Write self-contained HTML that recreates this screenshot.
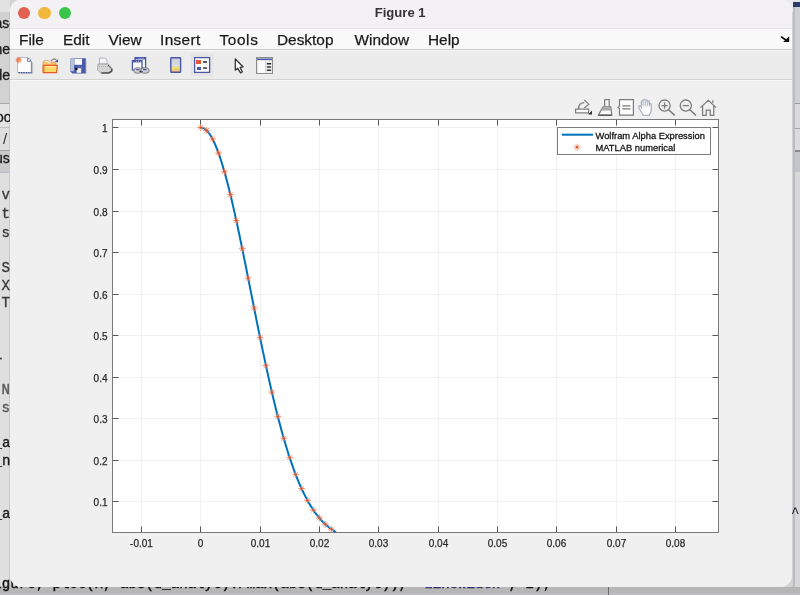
<!DOCTYPE html>
<html><head><meta charset="utf-8">
<style>
*{margin:0;padding:0;box-sizing:border-box}
html,body{width:800px;height:595px;overflow:hidden;background:#d2d2d2;font-family:"Liberation Sans",sans-serif}
.abs{position:absolute}
.mono{font-family:"Liberation Mono",monospace;font-size:14.08px;line-height:16px}
.sans{font-family:"Liberation Sans",sans-serif}
#win,svg,#desk{will-change:transform}
#win{position:absolute;left:10.3px;top:0;width:782.3px;height:587px;border-radius:10px 10px 12px 12px;overflow:hidden;background:#f0f0f0}
#title{position:absolute;left:0;top:0;width:100%;height:28px;background:#f3f1f3}
#title .t{position:absolute;left:-1px;width:100%;top:5px;text-align:center;font-weight:bold;font-size:13.1px;color:#333;}
.light{position:absolute;top:7.15px;width:12.2px;height:12.2px;border-radius:50%}
#menu{position:absolute;left:0;top:28px;width:100%;height:22px;background:#f9f9f9;border-top:1px solid #e6e4e6;border-bottom:1px solid #c8c8c8}
#menu span{position:absolute;top:2px;font-size:15.4px;color:#1a1a1a;-webkit-text-stroke:0.25px #1a1a1a}
#tool{position:absolute;left:0;top:50px;width:100%;height:30px;background:#ececec;border-top:1px solid #fafafa;border-bottom:1px solid #d2d2d2}
#fig{position:absolute;left:0;top:80px;width:100%;height:507px;background:#f0f0f0;border-top:1px solid #f8f8f8}
svg text{font-family:"Liberation Sans",sans-serif}
</style></head><body>
<div id="desk">
 <div class="abs" style="left:775px;top:0;width:25px;height:2px;background:#ececec"></div>
 <div class="abs" style="left:775px;top:0;width:18px;height:12px;background:#ececec"></div>
 <div class="abs" style="left:0;top:0;width:10px;height:12px;background:#e2e2e2"></div>
 <div class="abs" style="left:0;top:12px;width:10px;height:91px;background:#d2d2d2"></div>
 <div class="abs" style="left:0;top:103px;width:10px;height:1px;background:#a8a8a8"></div>
 <div class="abs" style="left:0;top:104px;width:10px;height:23px;background:#e4e4e4"></div>
 <div class="abs" style="left:0;top:127px;width:10px;height:1px;background:#c4c4c4"></div>
 <div class="abs" style="left:0;top:128px;width:10px;height:22px;background:#dedede"></div>
 <div class="abs" style="left:0;top:150px;width:10px;height:1px;background:#a4a4a4"></div>
 <div class="abs" style="left:0;top:151px;width:10px;height:21px;background:#cacaca"></div>
 <div class="abs" style="left:0;top:172px;width:10px;height:1px;background:#b4bcc8"></div>
 <div class="abs" style="left:0;top:173px;width:10px;height:415px;background:#dfdfdf"></div>
 <div class="abs" style="left:8.5px;top:12px;width:1.5px;height:576px;background:#bcc4d0;opacity:.8"></div>
 <div class="abs sans" style="left:-5.5px;top:11px;font-size:14px;color:#1a1a1a;line-height:25.8px;-webkit-text-stroke:0.3px #1a1a1a">asc<br>nel<br>de</div>
 <div class="abs sans" style="left:-4px;top:109px;font-size:14px;color:#1a1a1a;-webkit-text-stroke:0.3px #1a1a1a">oo</div>
 <div class="abs sans" style="left:3px;top:130px;font-size:15px;color:#303030">/</div>
 <div class="abs sans" style="left:-5px;top:150px;font-size:14px;color:#1a1a1a;-webkit-text-stroke:0.3px #1a1a1a">us</div>
 <div class="abs mono" style="left:1.5px;top:187px;color:#3a3a3a;-webkit-text-stroke:0.35px #3a3a3a">v</div>
 <div class="abs mono" style="left:1.5px;top:206px;color:#3a3a3a;-webkit-text-stroke:0.35px #3a3a3a">t</div>
 <div class="abs mono" style="left:1.5px;top:224.5px;color:#3a3a3a;-webkit-text-stroke:0.35px #3a3a3a">s</div>
 <div class="abs mono" style="left:1.5px;top:260px;color:#3a3a3a;-webkit-text-stroke:0.35px #3a3a3a">S</div>
 <div class="abs mono" style="left:1.5px;top:278px;color:#3a3a3a;-webkit-text-stroke:0.35px #3a3a3a">X</div>
 <div class="abs mono" style="left:1.5px;top:294.5px;color:#3a3a3a;-webkit-text-stroke:0.35px #3a3a3a">T</div>
 <div class="abs mono" style="left:-4.5px;top:351px;color:#3a3a3a;-webkit-text-stroke:0.35px #3a3a3a">-</div>
 <div class="abs mono" style="left:1.5px;top:382px;color:#555;-webkit-text-stroke:0.35px #555">N</div>
 <div class="abs mono" style="left:1.5px;top:399.5px;color:#555;-webkit-text-stroke:0.35px #555">s</div>
 <div class="abs mono" style="left:-6.5px;top:435px;color:#1a1a1a;-webkit-text-stroke:0.35px #1a1a1a">_a</div>
 <div class="abs mono" style="left:-6.5px;top:452.5px;color:#1a1a1a;-webkit-text-stroke:0.35px #1a1a1a">_n</div>
 <div class="abs mono" style="left:-6.5px;top:506px;color:#1a1a1a;-webkit-text-stroke:0.35px #1a1a1a">_a</div>
 <div class="abs" style="left:0;top:587px;width:800px;height:8px;background:#b6b6b6"></div>
 <div class="abs" style="left:0;top:593px;width:800px;height:1px;background:#c4c8d4;opacity:.6"></div>
 <div class="abs" style="left:608px;top:587px;width:1.2px;height:8px;background:#6a6a6a"></div>
 <div class="abs mono" style="left:-15.1px;top:576px;color:#111;white-space:pre;-webkit-text-stroke:0.4px #111">figure; plot(x, abs(u_analyt)./max(abs(u_analyt)), <span style="color:#4a50c8">'LineWidth'</span>, 2);</div>
 <div class="abs" style="left:793px;top:0;width:7px;height:2px;background:#e4e4e4"></div>
 <div class="abs" style="left:793px;top:2px;width:7px;height:4.5px;background:#2c3a6c"></div>
 <div class="abs" style="left:793px;top:7px;width:7px;height:96px;background:#cdd0d4"></div>
 <div class="abs" style="left:793px;top:103px;width:7px;height:1px;background:#9a9a9a"></div>
 <div class="abs" style="left:793px;top:104px;width:7px;height:24px;background:#dadada"></div>
 <div class="abs" style="left:793px;top:128px;width:7px;height:1px;background:#a8a8a8"></div>
 <div class="abs" style="left:793px;top:129px;width:7px;height:21px;background:#dcdcdc"></div>
 <div class="abs" style="left:793px;top:150px;width:7px;height:2px;background:#8a8a8a"></div>
 <div class="abs" style="left:793px;top:152px;width:7px;height:20px;background:#c2c6cc"></div>
 <div class="abs" style="left:793px;top:172px;width:7px;height:415px;background:#d8d8d8"></div>
 <div class="abs" style="left:793px;top:7px;width:1.5px;height:580px;background:#b8bcc4"></div>
 <div class="abs mono" style="left:791px;top:505px;color:#111">^</div>
</div>
<div id="win">
 <div id="title">
  <div class="light" style="left:7.55px;background:#e0614f"></div>
  <div class="light" style="left:28.35px;background:#f0b73a"></div>
  <div class="light" style="left:49.15px;background:#3ac449"></div>
  <div class="t">Figure 1</div>
 </div>
 <div id="menu">
  <span style="left:9.0px">File</span>
  <span style="left:53.0px">Edit</span>
  <span style="left:98.5px">View</span>
  <span style="left:150.0px;letter-spacing:0.35px">Insert</span>
  <span style="left:209.5px;letter-spacing:0.6px">Tools</span>
  <span style="left:267.0px">Desktop</span>
  <span style="left:344.5px">Window</span>
  <span style="left:418px">Help</span>
 </div>
 <div id="tool"></div>
 <div id="fig"></div>
</div>
<!--PLOT--><svg class="abs" style="left:0;top:0" width="800" height="595" viewBox="0 0 800 595">
 <rect x="112.5" y="119.5" width="606.0" height="413.0" fill="#fff"/>
 <path d="M141.50,119.5V532.5M200.50,119.5V532.5M260.50,119.5V532.5M319.50,119.5V532.5M378.50,119.5V532.5M438.50,119.5V532.5M497.50,119.5V532.5M556.50,119.5V532.5M616.50,119.5V532.5M675.50,119.5V532.5M112.5,501.50H718.5M112.5,460.50H718.5M112.5,418.50H718.5M112.5,377.50H718.5M112.5,335.50H718.5M112.5,294.50H718.5M112.5,252.50H718.5M112.5,211.50H718.5M112.5,169.50H718.5M112.5,127.50H718.5" stroke="#f1f1f1" stroke-width="1" fill="none"/>
 <path d="M141.50,532.5v-6M141.50,119.5v6M200.50,532.5v-6M200.50,119.5v6M260.50,532.5v-6M260.50,119.5v6M319.50,532.5v-6M319.50,119.5v6M378.50,532.5v-6M378.50,119.5v6M438.50,532.5v-6M438.50,119.5v6M497.50,532.5v-6M497.50,119.5v6M556.50,532.5v-6M556.50,119.5v6M616.50,532.5v-6M616.50,119.5v6M675.50,532.5v-6M675.50,119.5v6M112.5,501.50h6M718.5,501.50h-6M112.5,460.50h6M718.5,460.50h-6M112.5,418.50h6M718.5,418.50h-6M112.5,377.50h6M718.5,377.50h-6M112.5,335.50h6M718.5,335.50h-6M112.5,294.50h6M718.5,294.50h-6M112.5,252.50h6M718.5,252.50h-6M112.5,211.50h6M718.5,211.50h-6M112.5,169.50h6M718.5,169.50h-6M112.5,127.50h6M718.5,127.50h-6" stroke="#555555" stroke-width="1" fill="none"/>
 <rect x="112.5" y="119.5" width="606.0" height="413.0" fill="none" stroke="#7a7a7a" stroke-width="1"/>
 <g font-size="10" fill="#2a2a2a" stroke="#2a2a2a" stroke-width="0.25"><text x="141.50" y="546.5" text-anchor="middle">-0.01</text><text x="200.50" y="546.5" text-anchor="middle">0</text><text x="260.50" y="546.5" text-anchor="middle">0.01</text><text x="319.50" y="546.5" text-anchor="middle">0.02</text><text x="378.50" y="546.5" text-anchor="middle">0.03</text><text x="438.50" y="546.5" text-anchor="middle">0.04</text><text x="497.50" y="546.5" text-anchor="middle">0.05</text><text x="556.50" y="546.5" text-anchor="middle">0.06</text><text x="616.50" y="546.5" text-anchor="middle">0.07</text><text x="675.50" y="546.5" text-anchor="middle">0.08</text><text x="107.5" y="505.80" text-anchor="end">0.1</text><text x="107.5" y="464.80" text-anchor="end">0.2</text><text x="107.5" y="422.80" text-anchor="end">0.3</text><text x="107.5" y="381.80" text-anchor="end">0.4</text><text x="107.5" y="339.80" text-anchor="end">0.5</text><text x="107.5" y="298.80" text-anchor="end">0.6</text><text x="107.5" y="256.80" text-anchor="end">0.7</text><text x="107.5" y="215.80" text-anchor="end">0.8</text><text x="107.5" y="173.80" text-anchor="end">0.9</text><text x="107.5" y="131.80" text-anchor="end">1</text></g>
 <defs><clipPath id="ax"><rect x="112.5" y="115.5" width="606.0" height="417.0"/></clipPath></defs>
 <g clip-path="url(#ax)"><polyline points="200.70,127.50 201.55,127.56 202.40,127.74 203.25,128.04 204.10,128.46 204.95,129.00 205.80,129.66 206.66,130.44 207.51,131.33 208.36,132.34 209.21,133.47 210.06,134.71 210.91,136.07 211.76,137.54 212.61,139.12 213.46,140.81 214.31,142.61 215.16,144.52 216.01,146.53 216.86,148.65 217.72,150.87 218.57,153.19 219.42,155.61 220.27,158.13 221.12,160.73 221.97,163.44 222.82,166.23 223.67,169.11 224.52,172.07 225.37,175.12 226.22,178.25 227.07,181.45 227.92,184.73 228.78,188.09 229.63,191.51 230.48,195.00 231.33,198.56 232.18,202.18 233.03,205.86 233.88,209.60 234.73,213.39 235.58,217.23 236.43,221.12 237.28,225.05 238.13,229.03 238.98,233.05 239.84,237.10 240.69,241.19 241.54,245.31 242.39,249.46 243.24,253.64 244.09,257.84 244.94,262.06 245.79,266.29 246.64,270.54 247.49,274.81 248.34,279.08 249.19,283.36 250.04,287.64 250.90,291.93 251.75,296.22 252.60,300.50 253.45,304.78 254.30,309.05 255.15,313.31 256.00,317.55 256.85,321.79 257.70,326.00 258.55,330.20 259.40,334.38 260.25,338.53 261.10,342.66 261.96,346.76 262.81,350.83 263.66,354.88 264.51,358.89 265.36,362.86 266.21,366.81 267.06,370.71 267.91,374.58 268.76,378.41 269.61,382.20 270.46,385.94 271.31,389.65 272.16,393.31 273.02,396.92 273.87,400.49 274.72,404.01 275.57,407.48 276.42,410.91 277.27,414.28 278.12,417.61 278.97,420.88 279.82,424.10 280.67,427.27 281.52,430.39 282.37,433.46 283.22,436.47 284.08,439.43 284.93,442.34 285.78,445.19 286.63,447.99 287.48,450.74 288.33,453.43 289.18,456.07 290.03,458.66 290.88,461.19 291.73,463.67 292.58,466.09 293.43,468.47 294.28,470.79 295.14,473.06 295.99,475.27 296.84,477.44 297.69,479.55 298.54,481.61 299.39,483.63 300.24,485.59 301.09,487.50 301.94,489.37 302.79,491.19 303.64,492.96 304.49,494.68 305.34,496.36 306.20,497.99 307.05,499.58 307.90,501.12 308.75,502.62 309.60,504.07 310.45,505.49 311.30,506.86 312.15,508.20 313.00,509.49 313.85,510.74 314.70,511.96 315.55,513.14 316.40,514.28 317.26,515.38 318.11,516.45 318.96,517.49 319.81,518.49 320.66,519.46 321.51,520.40 322.36,521.30 323.21,522.18 324.06,523.02 324.91,523.84 325.76,524.63 326.61,525.39 327.46,526.12 328.32,526.83 329.17,527.51 330.02,528.17 330.87,528.80 331.72,529.41 332.57,529.99 333.42,530.56 334.27,531.10 335.12,531.62 335.97,532.12" fill="none" stroke="#0072bd" stroke-width="2.0"/></g>
 <path d="M197.30,127.50H204.10M200.70,124.10V130.90M198.30,125.10L203.10,129.90M198.30,129.90L203.10,125.10M203.23,130.41H210.03M206.63,127.01V133.81M204.23,128.01L209.03,132.81M204.23,132.81L209.03,128.01M209.17,139.04H215.97M212.57,135.64V142.44M210.17,136.64L214.97,141.44M210.17,141.44L214.97,136.64M215.10,153.01H221.90M218.50,149.61V156.41M216.10,150.61L220.90,155.41M216.10,155.41L220.90,150.61M221.03,171.75H227.83M224.43,168.35V175.15M222.03,169.35L226.83,174.15M222.03,174.15L226.83,169.35M226.96,194.54H233.76M230.36,191.14V197.94M227.96,192.14L232.76,196.94M227.96,196.94L232.76,192.14M232.90,220.50H239.70M236.30,217.10V223.90M233.90,218.10L238.70,222.90M233.90,222.90L238.70,218.10M238.83,248.70H245.63M242.23,245.30V252.10M239.83,246.30L244.63,251.10M239.83,251.10L244.63,246.30M244.76,278.18H251.56M248.16,274.78V281.58M245.76,275.78L250.56,280.58M245.76,280.58L250.56,275.78M250.70,308.04H257.50M254.10,304.64V311.44M251.70,305.64L256.50,310.44M251.70,310.44L256.50,305.64M256.63,337.44H263.43M260.03,334.04V340.84M257.63,335.04L262.43,339.84M257.63,339.84L262.43,335.04M262.56,365.67H269.36M265.96,362.27V369.07M263.56,363.27L268.36,368.07M263.56,368.07L268.36,363.27M268.50,392.16H275.30M271.90,388.76V395.56M269.50,389.76L274.30,394.56M269.50,394.56L274.30,389.76M274.43,416.47H281.23M277.83,413.07V419.87M275.43,414.07L280.23,418.87M275.43,418.87L280.23,414.07M280.36,438.35H287.16M283.76,434.95V441.75M281.36,435.95L286.16,440.75M281.36,440.75L286.16,435.95M286.30,457.64H293.09M289.69,454.24V461.04M287.30,455.24L292.09,460.04M287.30,460.04L292.09,455.24M292.23,474.34H299.03M295.63,470.94V477.74M293.23,471.94L298.03,476.74M293.23,476.74L298.03,471.94M298.16,488.54H304.96M301.56,485.14V491.94M299.16,486.14L303.96,490.94M299.16,490.94L303.96,486.14M304.09,500.39H310.89M307.49,496.99V503.79M305.09,497.99L309.89,502.79M305.09,502.79L309.89,497.99M310.03,510.12H316.83M313.43,506.72V513.52M311.03,507.72L315.83,512.52M311.03,512.52L315.83,507.72M315.96,517.97H322.76M319.36,514.57V521.37M316.96,515.57L321.76,520.37M316.96,520.37L321.76,515.57M321.89,524.20H328.69M325.29,520.80V527.60M322.89,521.80L327.69,526.60M322.89,526.60L327.69,521.80M327.83,529.06H334.63M331.23,525.66V532.46M328.83,526.66L333.63,531.46M328.83,531.46L333.63,526.66" stroke="#ea8a62" stroke-width="0.85" fill="none"/>
 <g fill="#e04a2c"><circle cx="200.70" cy="127.50" r="1.1"/><circle cx="206.63" cy="130.41" r="1.1"/><circle cx="212.57" cy="139.04" r="1.1"/><circle cx="218.50" cy="153.01" r="1.1"/><circle cx="224.43" cy="171.75" r="1.1"/><circle cx="230.36" cy="194.54" r="1.1"/><circle cx="236.30" cy="220.50" r="1.1"/><circle cx="242.23" cy="248.70" r="1.1"/><circle cx="248.16" cy="278.18" r="1.1"/><circle cx="254.10" cy="308.04" r="1.1"/><circle cx="260.03" cy="337.44" r="1.1"/><circle cx="265.96" cy="365.67" r="1.1"/><circle cx="271.90" cy="392.16" r="1.1"/><circle cx="277.83" cy="416.47" r="1.1"/><circle cx="283.76" cy="438.35" r="1.1"/><circle cx="289.69" cy="457.64" r="1.1"/><circle cx="295.63" cy="474.34" r="1.1"/><circle cx="301.56" cy="488.54" r="1.1"/><circle cx="307.49" cy="500.39" r="1.1"/><circle cx="313.43" cy="510.12" r="1.1"/><circle cx="319.36" cy="517.97" r="1.1"/><circle cx="325.29" cy="524.20" r="1.1"/><circle cx="331.23" cy="529.06" r="1.1"/></g>
 <rect x="557.5" y="127.5" width="153" height="27" fill="#fff" stroke="#7c7c7c" stroke-width="1"/>
 <line x1="561.8" y1="134.7" x2="593" y2="134.7" stroke="#0072bd" stroke-width="2"/>
 <path d="M573.6,147.2H580.6M577.1,143.8V150.6M574.7,144.8L579.5,149.6M574.7,149.6L579.5,144.8" stroke="#ea8a62" stroke-width="0.85"/>
 <circle cx="577.1" cy="147.2" r="1.1" fill="#e04a2c"/>
 <g font-size="9.35" fill="#141414" stroke="#141414" stroke-width="0.28"><text x="595.5" y="139">Wolfram Alpha Expression</text><text x="595.5" y="151">MATLAB numerical</text></g>
</svg><!--/PLOT-->
<svg class="abs" style="left:0;top:0" width="800" height="595" viewBox="0 0 800 595">
<!-- new file -->
<g>
 <path d="M32.6,62.5V73.6H19" stroke="#c4c4c4" stroke-width="1" fill="none"/>
 <path d="M17.5,57.5H27.5L31.5,61.5V72.5H17.5Z" fill="#fcfcfc" stroke="#b4bccb" stroke-width="1"/>
 <path d="M27.5,57.5V61.5H31.5" fill="#e4e4e8" stroke="#8a90a8" stroke-width="1"/>
 <path d="M31.5,62V72.5" stroke="#8e8e8e" stroke-width="1.2" fill="none"/>
 <path d="M18.5,72.6H31.5" stroke="#3b4a9c" stroke-width="1.1" stroke-dasharray="1.4,1" fill="none"/>
 <circle cx="28.8" cy="58.5" r="0.6" fill="#3b4a9c"/><circle cx="30.5" cy="60.2" r="0.6" fill="#3b4a9c"/>
 <circle cx="18.6" cy="60.1" r="2.2" fill="#e2553a"/>
 <path d="M15.4,60.1H21.8M18.6,56.9V63.3M16.3,57.8L20.9,62.4M16.3,62.4L20.9,57.8" stroke="#ee8a6c" stroke-width="0.9"/>
 <circle cx="19.5" cy="60.6" r="0.9" fill="#f6d03a"/>
</g>
<!-- open folder -->
<g>
 <path d="M43.2,72.3V62.2L44.4,60.6H48.2L49.6,62.2H55.8V65" fill="#f6c45a" stroke="#ec9a6a" stroke-width="1"/>
 <path d="M44.8,62.2L45.6,61.4H47.6L48.6,62.6H50.5" stroke="#e8eef8" stroke-width="1.1" fill="none"/>
 <path d="M43.2,65.4H57.4L56.6,72.6H43.2Z" fill="#f8d868" stroke="#e65a2a" stroke-width="1.2"/>
 <path d="M45.5,66.6H56" stroke="#fff6e4" stroke-width="1" stroke-dasharray="1.2,0.6"/>
 <path d="M44.4,67.5V71.5" stroke="#f2a23c" stroke-width="1"/>
 <path d="M51.2,61.2C52,58.8 54.8,58.2 56.4,60.2" stroke="#909090" stroke-width="1.3" fill="none"/>
 <path d="M55,61.6L58.2,59.2L57.8,62.6Z" fill="#3a4aa0"/>
</g>
<!-- save -->
<g>
 <path d="M70.4,58.2H85.8V73.6H72.4L70.4,71.6Z" fill="#4c5aa8"/>
 <rect x="70.4" y="58.2" width="3.6" height="13" fill="#b8c0d8"/>
 <rect x="74.4" y="58.8" width="7.6" height="6" fill="#fdfdfd"/>
 <rect x="76.6" y="68.2" width="4.6" height="4.6" fill="#f2f2f2"/>
 <circle cx="76.4" cy="69" r="1.3" fill="#111"/>
 <circle cx="79.4" cy="66.6" r="0.6" fill="#2ea8e8"/>
 <circle cx="81.5" cy="67.5" r="0.6" fill="#2ea8e8"/>
 <path d="M86.4,60V73.6" stroke="#c4c4c4" stroke-width="0.8"/>
</g>
<!-- printer -->
<g>
 <path d="M99.5,58H105.5L107,60.5V64H99.5Z" fill="#f4f4f4" stroke="#b0b4bc" stroke-width="1"/>
 <path d="M98,64H108.5L112,68.5V72L109,73.5H101L97.5,70Z" fill="#d4d4d4" stroke="#9a9a9a" stroke-width="0.8"/>
 <path d="M101.5,72.8H109L111.8,70.8V68.5" stroke="#444" stroke-width="1.3" fill="none"/>
 <path d="M99,66.5H108" stroke="#a4b4cc" stroke-width="1" stroke-dasharray="1,1"/>
 <path d="M108,65L111,68.5" stroke="#555" stroke-width="1"/>
</g>
<!-- link figure -->
<g>
 <rect x="135" y="57.6" width="10.6" height="10.4" fill="#fafafa" stroke="#4a58a8" stroke-width="1.3"/>
 <rect x="135" y="57.2" width="10.6" height="2.2" fill="#4a58a8"/>
 <rect x="132.4" y="60.6" width="9.6" height="9.4" fill="#fafafa" stroke="#4a58a8" stroke-width="1.3"/>
 <rect x="132.4" y="60.2" width="9.6" height="2.2" fill="#4a58a8"/>
 <path d="M136,61.3H141M138.5,58.3H144.5" stroke="#dfe4f2" stroke-width="0.7" stroke-dasharray="1,1"/>
 <ellipse cx="138" cy="70.4" rx="4" ry="2.7" fill="#d0d0d0" stroke="#8c8c8c" stroke-width="1.1"/>
 <ellipse cx="145" cy="70.4" rx="4" ry="2.7" fill="#d0d0d0" stroke="#8c8c8c" stroke-width="1.1"/>
 <path d="M136.2,69.6H139.5M143,69.6H146.5M140,71.6H142.8" stroke="#4a58a8" stroke-width="1.1"/>
 <circle cx="140.2" cy="71.2" r="0.8" fill="#222"/>
</g>
<!-- colorbar -->
<g>
 <defs><linearGradient id="cbg" x1="0" y1="0" x2="0" y2="1"><stop offset="0" stop-color="#c8ccd8"/><stop offset="0.55" stop-color="#d8dce4"/><stop offset="0.7" stop-color="#f4e060"/><stop offset="1" stop-color="#f0b080"/></linearGradient></defs>
 <rect x="170.8" y="57.7" width="9.8" height="14.6" rx="0.6" fill="url(#cbg)" stroke="#4a58a8" stroke-width="1.4"/>
</g>
<!-- legend pressed -->
<g>
 <rect x="191.5" y="54.5" width="21.5" height="21" fill="#e6e6e6" stroke="#e0e0e0" stroke-width="1" stroke-dasharray="1,1"/>
 <rect x="194.6" y="57.6" width="15" height="14.8" fill="#fbfbfb" stroke="#4a58a8" stroke-width="1.3"/>
 <rect x="196" y="60" width="5" height="4" fill="#e0583c"/>
 <rect x="197" y="67" width="4" height="3" fill="#4a58a8"/>
 <rect x="203" y="61.2" width="4" height="1.6" rx="0.6" fill="#222"/>
 <rect x="203" y="67.2" width="4" height="1.6" rx="0.6" fill="#333"/>
</g>
<!-- arrow -->
<path d="M235.3,59V70.2L237.7,68.3L240.6,72.9L242.3,71.7L240.1,67.4L243,66.8Z" fill="#fff" stroke="#353535" stroke-width="1.3" stroke-linejoin="round"/>
<!-- property editor -->
<g>
 <rect x="256.5" y="57.5" width="16" height="16" fill="#d8d8d8" stroke="#8c8c8c" stroke-width="1"/>
 <rect x="257" y="58.6" width="15" height="1.5" fill="#4a58a8"/>
 <rect x="257.6" y="60.5" width="7.4" height="12.5" fill="#fbfbfb"/>
 <rect x="266" y="60.5" width="6" height="12.5" fill="#ececec"/>
 <rect x="266.8" y="63" width="4.4" height="1.5" rx="0.6" fill="#222"/>
 <rect x="266.8" y="66.3" width="4.4" height="1.5" rx="0.6" fill="#3a3a3a"/>
 <rect x="266.8" y="69.5" width="4.4" height="1.5" rx="0.6" fill="#3a3a3a"/>
</g>
</svg>
<svg class="abs" style="left:0;top:0" width="800" height="595" viewBox="0 0 800 595">
<g fill="none" stroke="#7b7b7b" stroke-width="1.2">
 <!-- export -->
 <rect x="575.6" y="109.1" width="13" height="3.8" fill="#fafafa"/>
 <path d="M578.5,109C578.5,104.5 581,102.5 585,102.8" stroke-width="1.3"/>
 <path d="M581,104.5C581.8,103.5 583,103.2 584.5,103.4" stroke="#c4c4c4" stroke-width="1"/>
 <path d="M584.3,100L588.8,104.2L584.3,108" fill="#f4f4f4" stroke-width="1.1"/>
 <path d="M588,114.6L592,110.6V114.6Z" fill="#333" stroke="none"/>
 <!-- brush -->
 <path d="M604.6,99.6H609.2V106.6" fill="#fcfcfc"/>
 <path d="M604.6,99.6V106.6" />
 <path d="M603,106.8H610.8L611.8,115.2H598.4Z" fill="#f8f8f8"/>
 <path d="M602.6,107.8H611V110.6H601.6Z" fill="#a8a8a8" stroke="none"/>
 <path d="M601,113H608" stroke="#fff" stroke-width="1"/>
 <path d="M598.6,115.2H611.8" stroke="#444" stroke-width="1.1"/>
 <!-- datatip -->
 <path d="M619.5,99.6H633.4V115.2H619.5V108.6L618,107.4L619.5,106.2Z" fill="#fbfbfb"/>
 <path d="M622.4,105.8H630.3M622.4,108.8H630.3" stroke="#7a7a7a" stroke-width="1.3"/>
 <!-- hand -->
 <path d="M641.5,112C640,110 638.5,107.5 638.8,106.5C639.2,105.5 640.5,106 641.3,107.3V101.8C641.3,100.6 643.2,100.6 643.2,101.8V100.5C643.2,99.2 645.3,99.2 645.3,100.5V100.8C645.3,99.6 647.3,99.6 647.3,100.8V101.8C647.3,100.7 649.3,100.7 649.3,101.8V104.5C649.5,103.5 651.3,103.5 651.3,104.6V109.5C651.3,112.5 650,114 649.2,115.4H643.2C642.7,114.2 642.2,113 641.5,112Z" stroke="#a9b4c4" stroke-width="1.3" fill="#fbfbfb"/>
 <path d="M643.2,102V106.5M645.3,100.8V106.2M647.3,101V106.3M649.3,102V106.5" stroke="#a9b4c4" stroke-width="1"/>
 <!-- zoom in -->
 <circle cx="664.6" cy="105.6" r="5.6" stroke-width="1.3"/>
 <path d="M668.6,109.8L674.8,115.4" stroke-width="1.5"/>
 <path d="M661.5,105.6H667.7M664.6,102.5V108.7" stroke-width="1.3"/>
 <!-- zoom out -->
 <circle cx="685.8" cy="105.6" r="5.6" stroke-width="1.3"/>
 <path d="M689.8,109.8L696,115.4" stroke-width="1.5"/>
 <path d="M682.7,105.6H688.9" stroke-width="1.3"/>
 <!-- home -->
 <path d="M700.5,107.6L708.3,100.2L716.2,107.6M702.6,106V115.4H706.2V110.2H710.2V115.4H713.8V106" stroke-width="1.2" stroke-linejoin="miter"/>
 <path d="M712.8,100.4V102.8" stroke-width="1.4"/>
</g>
</svg>
<svg class="abs" style="left:0;top:0" width="800" height="595" viewBox="0 0 800 595">
 <path d="M781.5,37L786.5,40.5" stroke="#111" stroke-width="1.6" stroke-linecap="round"/>
 <path d="M789.2,36.2V42H783.2Z" fill="#111"/>
</svg>
</body></html>
